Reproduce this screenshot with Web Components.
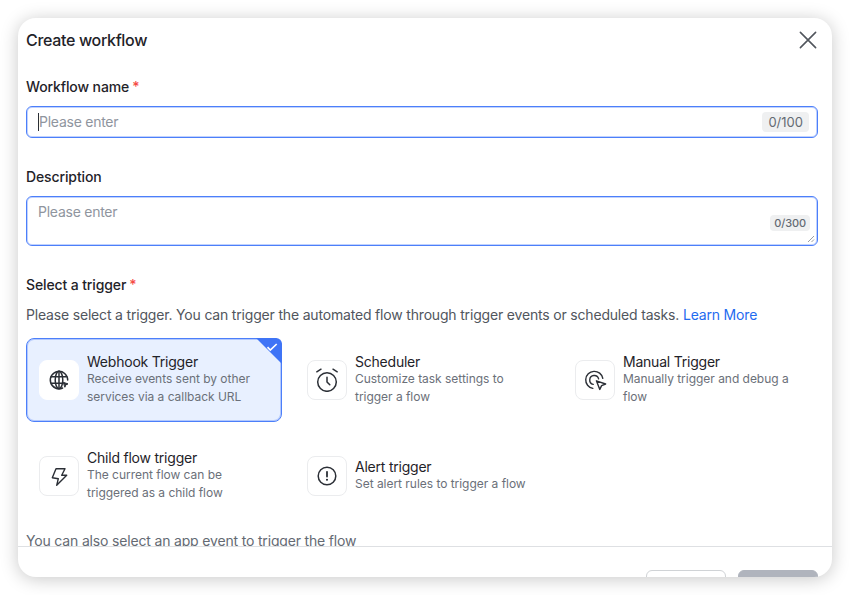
<!DOCTYPE html>
<html lang="en">
<head>
<meta charset="utf-8">
<title>Create workflow</title>
<style>
  html, body { margin: 0; background: #fff; }
  body { font-family: Inter, "Noto Sans", "Liberation Sans", sans-serif; color: #1f2329; }
</style>
</head>
<body>
<wf-dialog heading="Create workflow">
  <wf-field label="Workflow name" required>
    <wf-input placeholder="Please enter" count="0/100" focused></wf-input>
  </wf-field>
  <wf-field label="Description" style="margin-top:28px">
    <wf-textarea placeholder="Please enter" count="0/300"></wf-textarea>
  </wf-field>
  <wf-field label="Select a trigger" required style="margin-top:28px">
    <wf-trigger-picker>
      <span slot="hint">Please select a trigger. You can trigger the automated flow through trigger events or scheduled tasks.</span>
      <wf-trigger name="Webhook Trigger" selected>
        <svg slot="icon" viewBox="0 0 24 24" fill="none" stroke="#2b2f36" stroke-width="1.5" stroke-linecap="round"><path d="M15.6 20A8.7 8.7 0 1 1 20.7 12"/><ellipse cx="12" cy="12" rx="3.8" ry="8.7"/><path d="M12 3.3v17.4M4.2 8.8h15.6M4.2 15.2h11.4"/><path d="M16.6 14.4l4.4 1.5-2.1.9-.9 2.1z" fill="#2b2f36" stroke-width="1"/></svg>
        Receive events sent by other services via a callback URL
      </wf-trigger>
      <wf-trigger name="Scheduler">
        <svg slot="icon" viewBox="0 0 24 24" fill="none" stroke="#2b2f36" stroke-width="1.5" stroke-linecap="round" stroke-linejoin="round"><circle cx="12" cy="14" r="9.3"/><path d="M12 9.2V14l2.8 2.8"/><path d="M1.8 3.8L6 1.2M22.2 3.8L18 1.2"/></svg>
        Customize task settings to trigger a flow
      </wf-trigger>
      <wf-trigger name="Manual Trigger">
        <svg slot="icon" viewBox="0 0 24 24" fill="none" stroke="#2b2f36" stroke-width="1.4" stroke-linecap="round" stroke-linejoin="round"><path d="M9.8 20.4A8.6 8.6 0 1 1 19.8 10.4"/><path d="M10.2 16.4A4.5 4.5 0 1 1 15.6 10.9"/><path d="M13.4 12.8L22.6 16l-4 1.6-1.8 3.8z"/></svg>
        Manually trigger and debug a flow
      </wf-trigger>
      <wf-trigger name="Child flow trigger">
        <svg slot="icon" viewBox="0 0 24 24" fill="none" stroke="#2b2f36" stroke-width="1.4" stroke-linecap="round" stroke-linejoin="round"><path d="M9 4.7h9l-3.3 6.6h5L9.7 21.3l1.6-6.6-6-1z"/></svg>
        The current flow can be triggered as a child flow
      </wf-trigger>
      <wf-trigger name="Alert trigger">
        <svg slot="icon" viewBox="0 0 24 24" fill="none" stroke="#2b2f36" stroke-width="1.5" stroke-linecap="round"><circle cx="12" cy="12" r="8.8"/><path d="M12 7.8v4.8" stroke-width="1.8"/><circle cx="12" cy="15.8" r=".5" fill="#2b2f36" stroke-width="1.1"/></svg>
        Set alert rules to trigger a flow
      </wf-trigger>
      <span slot="extra">You can also select an app event to trigger the flow</span>
    </wf-trigger-picker>
  </wf-field>
  <wf-button slot="footer">Cancel</wf-button>
  <wf-button slot="footer" primary disabled>Create</wf-button>
</wf-dialog>

<script>
class WfDialog extends HTMLElement {
  constructor(){
    super();
    this.attachShadow({mode:"open"});
  }
  connectedCallback(){
    this.shadowRoot.innerHTML=`
    <style>
      :host { display: block; width: 850px; height: 595px; padding: 18px; box-sizing: border-box; }
      .modal {
        height: 559px;
        background: #fff;
        border-radius: 18px;
        box-shadow: 0 2px 18px rgba(0,0,0,.22);
        overflow: hidden;
        display: flex;
        flex-direction: column;
      }
      header {
        height: 44px;
        flex: none;
        display: flex;
        justify-content: space-between;
        align-items: center;
        padding: 0 14px 0 8px;
      }
      h2 { margin: 0; font-size: 16px; font-weight: 500; line-height: 24px; letter-spacing: -.33px; color: #1f2329; }
      svg { width: 20px; height: 20px; display: block; }
      main { height: 484px; flex: none; overflow: hidden; padding: 14px 14px 0 8px; box-sizing: border-box; }
      footer {
        flex: none;
        border-top: 1px solid #dee0e3;
        padding: 23px 14px 0 0;
        display: flex;
        justify-content: flex-end;
        gap: 12px;
      }
    </style>
    <div class="modal">
      <header>
        <h2>${this.getAttribute("heading") ?? ""}</h2>
        <svg viewBox="0 0 20 20" fill="none" stroke="#51565d" stroke-width="1.6" stroke-linecap="round"><path d="M2.4 2.4l15.2 15.2M17.6 2.4L2.4 17.6"/></svg>
      </header>
      <main><slot></slot></main>
      <footer><slot name="footer"></slot></footer>
    </div>`;
  }
}

class WfField extends HTMLElement {
  constructor(){
    super();
    this.attachShadow({mode:"open"});
  }
  connectedCallback(){
    const star = this.hasAttribute("required") ? `<span class="star">*</span>` : "";
    this.shadowRoot.innerHTML=`
    <style>
      :host { display: block; }
      label { display: block; height: 22px; margin-bottom: 8px; font-size: 14px; line-height: 22px; font-weight: 500; letter-spacing: -.12px; color: #1f2329; }
      .star { color: #f54a45; margin-left: 3px; }
    </style>
    <label>${this.getAttribute("label") ?? ""}${star}</label>
    <slot></slot>`;
  }
}

class WfInput extends HTMLElement {
  constructor(){
    super();
    this.attachShadow({mode:"open"});
  }
  connectedCallback(){
    this.shadowRoot.innerHTML=`
    <style>
      :host { display: block; }
      .box {
        height: 32px;
        box-sizing: border-box;
        border: 1px solid #4c7ffa;
        box-shadow: inset 0 0 0 1px rgba(76,127,250,.35);
        border-radius: 6px;
        display: flex;
        align-items: center;
        justify-content: space-between;
        padding: 0 8px 0 11px;
        background: #fff;
      }
      .ph { font-size: 14px; color: #8f959e; border-left: 1px solid #2b2f36; line-height: 18px; letter-spacing: -.25px; }
      .count { font-size: 13px; line-height: 20px; padding: 0 6px; border-radius: 4px; background: #eff0f1; color: #646a73; }
    </style>
    <div class="box">
      <span class="ph">${this.getAttribute("placeholder") ?? ""}</span>
      <span class="count">${this.getAttribute("count") ?? ""}</span>
    </div>`;
  }
}

class WfTextarea extends HTMLElement {
  constructor(){
    super();
    this.attachShadow({mode:"open"});
  }
  connectedCallback(){
    this.shadowRoot.innerHTML=`
    <style>
      :host { display: block; }
      .box {
        height: 50px;
        box-sizing: border-box;
        border: 1px solid #4c7ffa;
        box-shadow: inset 0 0 0 1px rgba(76,127,250,.35);
        border-radius: 6px;
        padding: 5px 11px;
        position: relative;
        background: #fff;
        font-size: 14px;
        line-height: 20px;
        letter-spacing: -.25px;
        color: #8f959e;
      }
      .count {
        position: absolute;
        right: 7px;
        bottom: 14px;
        font-size: 11px;
        font-weight: 500;
        line-height: 16px;
        letter-spacing: -.1px;
        padding: 0 4px;
        border-radius: 4px;
        background: #eff0f1;
        color: #646a73;
      }
      svg { position: absolute; right: 2px; bottom: 2px; width: 8px; height: 8px; }
    </style>
    <div class="box">
      ${this.getAttribute("placeholder") ?? ""}
      <span class="count">${this.getAttribute("count") ?? ""}</span>
      <svg viewBox="0 0 8 8" stroke="#9a9ea5" stroke-width="1"><path d="M1 7l6-6M4.5 7L7 4.5"/></svg>
    </div>`;
  }
}

class WfTriggerPicker extends HTMLElement {
  constructor(){
    super();
    this.attachShadow({mode:"open"});
  }
  connectedCallback(){
    this.shadowRoot.innerHTML=`
    <style>
      :host { display: block; }
      p { margin: 0 0 12px; font-size: 14px; line-height: 22px; letter-spacing: -.18px; color: #51565d; }
      a { color: #1f6bf0; text-decoration: none; }
      .grid { display: grid; grid-template-columns: repeat(3, 256px); gap: 12px; }
      .extra { margin-top: 12px; font-size: 14px; line-height: 22px; letter-spacing: -.17px; color: #646a73; }
    </style>
    <p><slot name="hint"></slot> <a href="#">Learn More</a></p>
    <div class="grid"><slot></slot></div>
    <div class="extra"><slot name="extra"></slot></div>`;
  }
}

class WfTrigger extends HTMLElement {
  constructor(){
    super();
    this.attachShadow({mode:"open"});
  }
  connectedCallback(){
    const tick = this.hasAttribute("selected") ? `
      <svg class="tick" viewBox="0 0 26 26"><path d="M0 0h20a6 6 0 0 1 6 6v20z" fill="#3f74f6"/><path d="M11.5 9.2l2.8 2.8 6.4-6" fill="none" stroke="#fff" stroke-width="1.7"/></svg>` : "";
    this.shadowRoot.innerHTML=`
    <style>
      :host {
        display: flex;
        align-items: center;
        gap: 8px;
        height: 84px;
        box-sizing: border-box;
        padding: 0 12px;
        border: 1px solid transparent;
        border-radius: 8px;
        position: relative;
      }
      :host([selected]) { background: #e8f0ff; border-color: #4c7ffa; box-shadow: inset 0 0 0 1px rgba(76,127,250,.35); }
      .icon {
        flex: none;
        width: 40px;
        height: 40px;
        box-sizing: border-box;
        border: 1px solid #ebecee;
        border-radius: 8px;
        background: #fff;
        display: flex;
        align-items: center;
        justify-content: center;
      }
      :host([selected]) .icon { border-color: #fff; }
      ::slotted(svg) { width: 24px; height: 24px; display: block; }
      .text { margin-bottom: 1px; }
      .name { font-size: 14px; line-height: 17px; letter-spacing: -.22px; color: #1f2329; }
      .desc { font-size: 12px; line-height: 18px; letter-spacing: -.03px; color: #6b7079; }
      .tick { position: absolute; top: -1px; right: -1px; width: 26px; height: 26px; }
    </style>
    <div class="icon"><slot name="icon"></slot></div>
    <div class="text">
      <div class="name">${this.getAttribute("name") ?? ""}</div>
      <div class="desc"><slot></slot></div>
    </div>
    ${tick}`;
  }
}

class WfButton extends HTMLElement {
  constructor(){
    super();
    this.attachShadow({mode:"open"});
  }
  connectedCallback(){
    this.shadowRoot.innerHTML=`
    <style>
      :host {
        display: flex;
        align-items: center;
        justify-content: center;
        width: 80px;
        height: 36px;
        box-sizing: border-box;
        border: 1px solid #d0d3d6;
        border-radius: 6px;
        background: #fff;
        font-size: 14px;
        color: #1f2329;
      }
      :host([primary]) { background: #b0b4bd; border-color: #b0b4bd; color: #fff; }
    </style>
    <slot></slot>`;
  }
}

customElements.define("wf-dialog",WfDialog);
customElements.define("wf-field",WfField);
customElements.define("wf-input",WfInput);
customElements.define("wf-textarea",WfTextarea);
customElements.define("wf-trigger-picker",WfTriggerPicker);
customElements.define("wf-trigger",WfTrigger);
customElements.define("wf-button",WfButton);
</script>
</body>
</html>
